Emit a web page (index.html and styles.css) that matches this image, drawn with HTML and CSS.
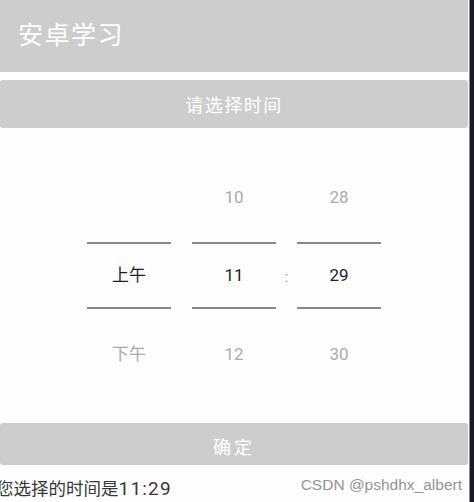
FILE: index.html
```html
<!DOCTYPE html>
<html lang="zh">
<head>
<meta charset="utf-8">
<title>安卓学习</title>
<link rel="stylesheet" href="styles.css">
</head>
<body>
<div class="screen">
  <main class="app">
    <header class="appbar">安卓学习</header>
    <button class="btn btn-pick">请选择时间</button>
    <section class="picker">
      <div class="col">
        <div class="item dim"></div>
        <div class="item sel">上午</div>
        <div class="item dim">下午</div>
      </div>
      <div class="spacer"></div>
      <div class="col">
        <div class="item dim">10</div>
        <div class="item sel">11</div>
        <div class="item dim">12</div>
      </div>
      <div class="colon">:</div>
      <div class="col">
        <div class="item dim">28</div>
        <div class="item sel">29</div>
        <div class="item dim">30</div>
      </div>
    </section>
    <button class="btn btn-ok">确定</button>
    <div class="footer">
      <span class="result">您选择的时间是<span class="time">11:29</span></span>
      <span class="mark">CSDN @pshdhx_albert</span>
    </div>
  </main>
  <div class="edge"></div>
</div>
</body>
</html>
```

FILE: styles.css
```css
* { box-sizing: border-box; }
html, body {
  margin: 0;
  padding: 0;
  width: 474px;
  height: 502px;
  overflow: hidden;
  background: #fdfdfd;
}
.screen {
  display: flex;
  width: 474px;
  height: 502px;
}
.app {
  width: 469px;
  height: 502px;
  display: flex;
  flex-direction: column;
  background: #fdfdfd;
  font-family: Roboto, "Noto Sans CJK SC", sans-serif;
  overflow: hidden;
}
.edge {
  width: 5px;
  height: 502px;
  background: #1b1a24;
  border-left: 1px solid #8a8a90;
}
.appbar {
  height: 72px;
  line-height: 72px;
  padding-left: 18px;
  background: #cdcdcd;
  color: #ffffff;
  font-size: 25px;
  letter-spacing: 1.5px;
  margin-right: 1px;
}
.btn {
  display: block;
  border: 0;
  padding: 0;
  margin: 0 1px 0 0;
  background: #cdcdcd;
  color: #ffffff;
  border-radius: 3px;
  font-family: Roboto, "Noto Sans CJK SC", sans-serif;
  font-size: 18px;
  text-align: center;
}
.btn-pick {
  margin-top: 8px;
  height: 48px;
  letter-spacing: 1.5px;
}
.btn-ok {
  height: 42px;
  letter-spacing: 3px;
  padding-top: 4px;
}
.picker {
  height: 295px;
  display: flex;
  align-items: center;
  padding-left: 87px;
}
.col {
  width: 84px;
  display: flex;
  flex-direction: column;
}
.spacer { width: 21px; }
.colon {
  width: 21px;
  text-align: center;
  color: #8e8e8e;
  font-size: 14px;
  padding-top: 2px;
}
.item {
  height: 44px;
  line-height: 44px;
  text-align: center;
  font-size: 17px;
}
.item.dim { color: #ababab; }
.item.sel {
  height: 67px;
  line-height: 63px;
  margin: 23px 0;
  color: #1e1e1e;
  border-top: 2px solid #888888;
  border-bottom: 2px solid #888888;
}
.footer {
  flex: 1;
  display: flex;
  align-items: center;
  justify-content: space-between;
  padding-top: 8px;
}
.result {
  margin-left: -4px;
  font-size: 17.5px;
  color: #383838;
  white-space: nowrap;
}
.time {
  font-size: 19px;
  letter-spacing: 1.2px;
}
.mark {
  margin-right: 7px;
  font-family: "Liberation Sans", Arial, sans-serif;
  font-size: 15.5px;
  color: #959595;
  margin-top: -6px;
}
```
